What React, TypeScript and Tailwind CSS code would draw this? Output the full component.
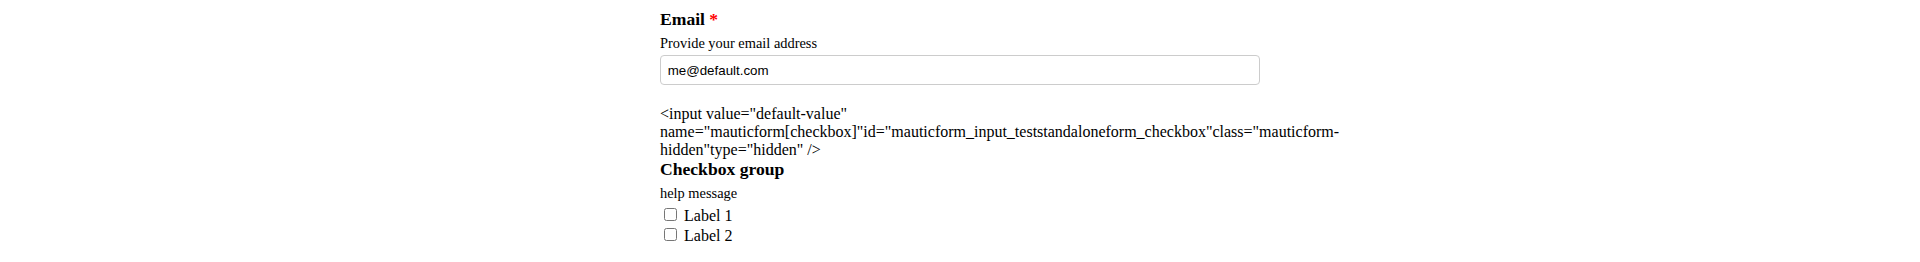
import React from 'react';

const hiddenMarkup =
  '<input value="default-value" name="mauticform[checkbox]"id="mauticform_input_teststandaloneform_checkbox"class="mauticform-hidden"type="hidden" />';

export default function App() {
  return (
    <div className="min-h-[262px] bg-white font-['Liberation_Serif',serif] text-[16px] leading-[normal] text-black">
      <div className="mx-auto max-w-[600px] pt-[9px]">
        {/* Email row */}
        <div className="mb-[20px]">
          <label className="mb-[5px] block text-[17.6px] font-bold">
            Email<span className="text-[#ff0000]"> *</span>
          </label>
          <span className="mb-[3px] block text-[14.4px]">Provide your email address</span>
          <input
            type="email"
            defaultValue="me@default.com"
            className="block w-full rounded-[4px] border border-[#cccccc] bg-white p-[0.5em] font-['Liberation_Sans',Arial,sans-serif] text-[13.333px] leading-[normal] text-black"
          />
        </div>

        <div>{hiddenMarkup}</div>

        {/* Checkbox group */}
        <div className="mb-[20px]">
          <label className="mb-[5px] block text-[17.6px] font-bold">Checkbox group</label>
          <span className="mb-[3px] block text-[14.4px]">help message</span>
          {['Label 1', 'Label 2'].map((label) => (
            <div key={label}>
              <label>
                <input type="checkbox" className="mt-[3px] mr-[3px] mb-[3px] ml-[4px]" /> {label}
              </label>
            </div>
          ))}
        </div>
      </div>
    </div>
  );
}
